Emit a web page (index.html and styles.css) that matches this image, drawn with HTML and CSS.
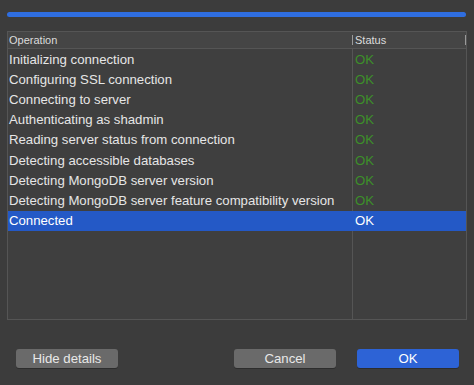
FILE: index.html
```html
<!DOCTYPE html>
<html>
<head>
<meta charset="utf-8">
<link rel="stylesheet" href="styles.css">
</head>
<body>
<div class="dialog">
  <div class="progress"></div>
  <div class="table">
    <div class="row header">
      <div class="hcell op">Operation</div>
      <span class="hsep"></span>
      <div class="hcell st">Status</div>
      <span class="hsep"></span>
    </div>
    <div class="row"><div class="cell op">Initializing connection</div><div class="cell st ok">OK</div></div>
    <div class="row"><div class="cell op">Configuring SSL connection</div><div class="cell st ok">OK</div></div>
    <div class="row"><div class="cell op">Connecting to server</div><div class="cell st ok">OK</div></div>
    <div class="row"><div class="cell op">Authenticating as shadmin</div><div class="cell st ok">OK</div></div>
    <div class="row"><div class="cell op">Reading server status from connection</div><div class="cell st ok">OK</div></div>
    <div class="row"><div class="cell op">Detecting accessible databases</div><div class="cell st ok">OK</div></div>
    <div class="row"><div class="cell op">Detecting MongoDB server version</div><div class="cell st ok">OK</div></div>
    <div class="row"><div class="cell op">Detecting MongoDB server feature compatibility version</div><div class="cell st ok">OK</div></div>
    <div class="row selected"><div class="cell op">Connected</div><div class="cell st">OK</div></div>
    <div class="row filler"><div class="cell op"></div><div class="cell st"></div></div>
  </div>
  <div class="buttons">
    <button class="btn">Hide details</button>
    <div class="spacer"></div>
    <button class="btn">Cancel</button>
    <button class="btn primary">OK</button>
  </div>
</div>
</body>
</html>
```
FILE: styles.css
```css
html, body {
  margin: 0;
  padding: 0;
  background: #3c3c3c;
}
body {
  width: 474px;
  height: 385px;
  overflow: hidden;
  font-family: "Liberation Sans", Arial, sans-serif;
  color: #e6e6e6;
}
.dialog {
  display: flex;
  flex-direction: column;
  height: 385px;
  padding: 12px 7px 0 7px;
  box-sizing: border-box;
}
.progress {
  height: 5px;
  border-radius: 3px;
  background: #2f6ee0;
  margin-right: 1px;
}
.table {
  margin-top: 14px;
  height: 289px;
  border: 1px solid #555;
  background: #3f3f3f;
  display: flex;
  flex-direction: column;
  box-sizing: border-box;
}
.row {
  display: flex;
  height: 20.2px;
  align-items: center;
  font-size: 13.2px;
  flex-shrink: 0;
}
.cell.op {
  width: 345px;
  padding-left: 1px;
  box-sizing: border-box;
  border-right: 1px solid #555;
  height: 100%;
  display: flex;
  align-items: center;
  white-space: nowrap;
}
.cell.st {
  flex: 1;
  padding-left: 2px;
  height: 100%;
  display: flex;
  align-items: center;
}
.header {
  height: 16px;
  background: #454545;
  font-size: 11px;
  color: #dcdcdc;
  border-bottom: 1px solid #555;
}
.hcell.op {
  width: 344px;
  padding-left: 1px;
  box-sizing: border-box;
}
.hcell.st {
  flex: 1;
  padding-left: 2px;
}
.hsep {
  width: 1px;
  height: 10px;
  background: #9a9a9a;
}
.ok {
  color: #3d8f2a;
}
.selected {
  background: #2459c6;
  color: #ffffff;
}
.selected .cell.op {
  border-right-color: #2459c6;
}
.filler {
  flex: 1;
}
.buttons {
  display: flex;
  align-items: center;
  margin-top: 29px;
  padding: 0 8px 0 9px;
}
.spacer { flex: 1; }
.btn {
  width: 102px;
  height: 19px;
  border: none;
  border-radius: 3px;
  background: #6a6a6a;
  color: #e8e8e8;
  font-family: "Liberation Sans", Arial, sans-serif;
  font-size: 13.2px;
  padding: 0;
  box-shadow: 0 1px 0 rgba(0,0,0,0.25);
}
.btn.primary {
  background: #2d63d6;
  color: #fff;
  margin-left: 21px;
}
```
